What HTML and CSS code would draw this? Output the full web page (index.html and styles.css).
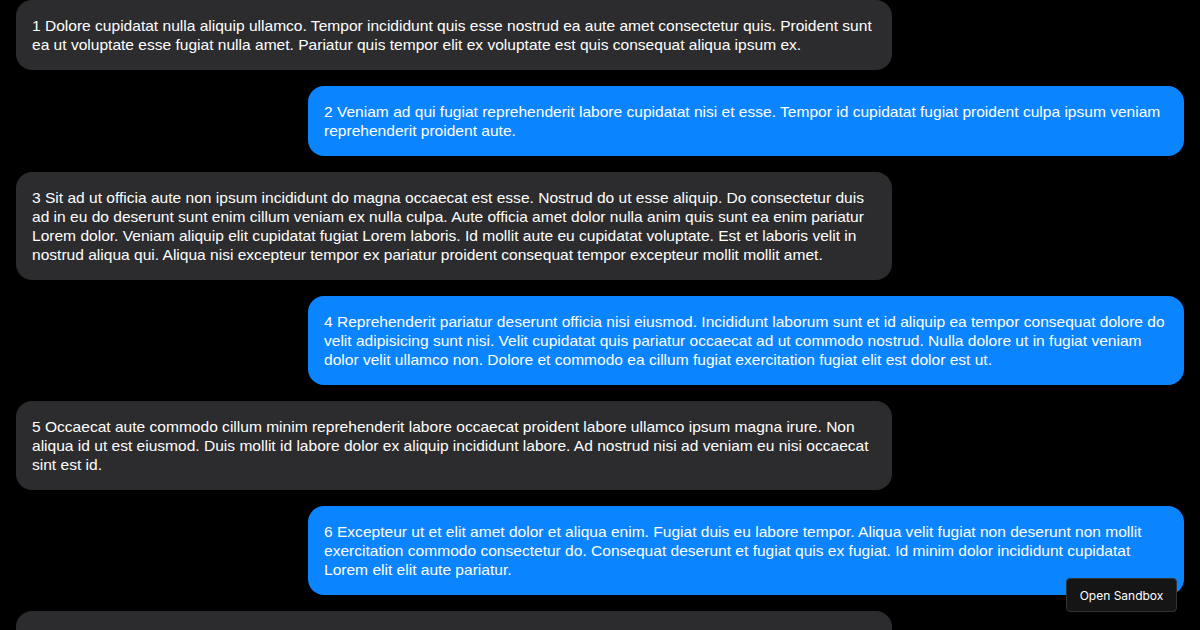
FILE: index.html
```html
<!DOCTYPE html>
<html>
<head>
<meta charset="utf-8">
<link rel="stylesheet" href="styles.css">
</head>
<body>
<div class="chat">
  <div class="msg left">1 Dolore cupidatat nulla aliquip ullamco. Tempor incididunt quis esse nostrud ea aute amet consectetur quis. Proident sunt ea ut voluptate esse fugiat nulla amet. Pariatur quis tempor elit ex voluptate est quis consequat aliqua ipsum ex.</div>
  <div class="msg right">2 Veniam ad qui fugiat reprehenderit labore cupidatat nisi et esse. Tempor id cupidatat fugiat proident culpa ipsum veniam reprehenderit proident aute.</div>
  <div class="msg left">3 Sit ad ut officia aute non ipsum incididunt do magna occaecat est esse. Nostrud do ut esse aliquip. Do consectetur duis ad in eu do deserunt sunt enim cillum veniam ex nulla culpa. Aute officia amet dolor nulla anim quis sunt ea enim pariatur Lorem dolor. Veniam aliquip elit cupidatat fugiat Lorem laboris. Id mollit aute eu cupidatat voluptate. Est et laboris velit in nostrud aliqua qui. Aliqua nisi excepteur tempor ex pariatur proident consequat tempor excepteur mollit mollit amet.</div>
  <div class="msg right">4 Reprehenderit pariatur deserunt officia nisi eiusmod. Incididunt laborum sunt et id aliquip ea tempor consequat dolore do velit adipisicing sunt nisi. Velit cupidatat quis pariatur occaecat ad ut commodo nostrud. Nulla dolore ut in fugiat veniam dolor velit ullamco non. Dolore et commodo ea cillum fugiat exercitation fugiat elit est dolor est ut.</div>
  <div class="msg left">5 Occaecat aute commodo cillum minim reprehenderit labore occaecat proident labore ullamco ipsum magna irure. Non aliqua id ut est eiusmod. Duis mollit id labore dolor ex aliquip incididunt labore. Ad nostrud nisi ad veniam eu nisi occaecat sint est id.</div>
  <div class="msg right">6 Excepteur ut et elit amet dolor et aliqua enim. Fugiat duis eu labore tempor. Aliqua velit fugiat non deserunt non mollit exercitation commodo consectetur do. Consequat deserunt et fugiat quis ex fugiat. Id minim dolor incididunt cupidatat Lorem elit elit aute pariatur.</div>
  <div class="msg left">7 Cillum labore nisi aute esse ea. Amet minim ipsum est aliqua cupidatat eiusmod consequat. Ipsum in culpa laboris nulla deserunt enim sint nostrud.</div>
</div>
<button class="sandbox">Open Sandbox</button>
</body>
</html>
```
FILE: styles.css
```css
html, body {
  margin: 0;
  padding: 0;
  background: #000;
  overflow: hidden;
  height: 630px;
}
.chat {
  display: flex;
  flex-direction: column;
  gap: 16px;
  padding: 0 16px;
  font-family: "Liberation Sans", Arial, sans-serif;
  font-size: 15.55px;
  line-height: 19px;
  color: #fff;
}
.msg {
  max-width: 75%;
  box-sizing: border-box;
  padding: 16px;
  border-radius: 16px;
}
.left {
  align-self: flex-start;
  background: #2c2c2e;
}
.right {
  align-self: flex-end;
  background: #0a84ff;
}
.sandbox {
  position: fixed;
  right: 23px;
  bottom: 18px;
  width: 111px;
  height: 34px;
  padding: 0;
  background: #151515;
  color: #fff;
  border: 1px solid #333;
  border-radius: 4px;
  font-family: Inter, "Liberation Sans", sans-serif;
  font-size: 12px;
}
```
